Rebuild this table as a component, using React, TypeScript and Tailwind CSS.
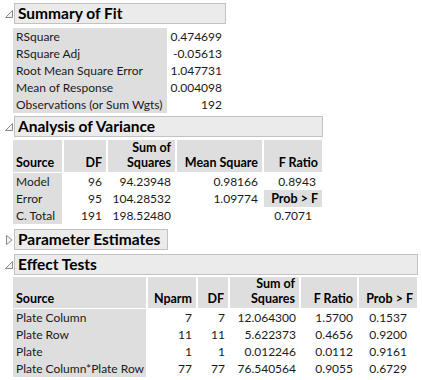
import type { ReactNode } from 'react'

function OpenTri() {
  return (
    <svg width="10" height="10" viewBox="0 0 10 10" className="shrink-0">
      <path d="M1.5 8.5 L8.5 1.5 L8.5 8.5 Z" fill="#f4f4f4" stroke="#8a8a8a" strokeWidth="1" />
    </svg>
  )
}

function ClosedTri() {
  return (
    <svg width="10" height="12" viewBox="0 0 10 12" className="shrink-0">
      <path d="M2.5 1.5 L8 6 L2.5 10.5 Z" fill="#f4f4f4" stroke="#8a8a8a" strokeWidth="1" />
    </svg>
  )
}

function Outline({ title, width, open = true }: { title: string; width: string; open?: boolean }) {
  return (
    <div className="flex items-center">
      <div className="flex w-[10px] justify-center">{open ? <OpenTri /> : <ClosedTri />}</div>
      <div
        className={`${width} h-[21px] border border-[#c2c2c2] bg-[#ebebeb] pl-[3px] text-[15.5px] leading-[19px] font-bold text-black`}
      >
        {title}
      </div>
    </div>
  )
}

function H({ children, left, cls = '' }: { children: ReactNode; left?: boolean; cls?: string }) {
  return (
    <div
      className={`flex flex-col justify-end bg-[#dedede] pb-[2px] text-[12.5px] leading-[15px] font-bold text-black ${
        left ? 'pl-[3px] text-left' : 'pr-[4px] text-right'
      } ${cls}`}
    >
      {children}
    </div>
  )
}

function C({ children, gray, cls = '' }: { children?: ReactNode; gray?: boolean; cls?: string }) {
  return (
    <div className={`h-[17px] leading-[17px] ${gray ? 'bg-[#dedede]' : ''} ${cls}`}>{children}</div>
  )
}

const summary: [string, string][] = [
  ['RSquare', '0.474699'],
  ['RSquare Adj', '-0.05613'],
  ['Root Mean Square Error', '1.047731'],
  ['Mean of Response', '0.004098'],
  ['Observations (or Sum Wgts)', '192'],
]

const effects: [string, string, string, string, string, string][] = [
  ['Plate Column', '7', '7', '12.064300', '1.5700', '0.1537'],
  ['Plate Row', '11', '11', '5.622373', '0.4656', '0.9200'],
  ['Plate', '1', '1', '0.012246', '0.0112', '0.9161'],
  ['Plate Column*Plate Row', '77', '77', '76.540564', '0.9055', '0.6729'],
]

export default function App() {
  return (
    <div
      className="h-[380px] w-[422px] bg-white pt-[3px] pl-[4px] text-[12px] text-[#1a1a1a]"
      style={{ fontFamily: 'Lato, sans-serif' }}
    >
      <Outline title="Summary of Fit" width="w-[212px]" />
      <div className="mt-[4px] ml-[9px] grid grid-cols-[154px_59px]">
        {summary.map(([k, v]) => (
          <div key={k} className="contents">
            <C gray cls="pl-[3px]">{k}</C>
            <C cls="pr-[4px] text-right">{v}</C>
          </div>
        ))}
      </div>

      <div className="mt-[3px]">
        <Outline title="Analysis of Variance" width="w-[309px]" />
      </div>
      <div className="mt-[3px] ml-[9px] grid grid-cols-[49px_42px_67px_85px_58px] gap-x-[2px]">
        <H left cls="h-[32px]">Source</H>
        <H cls="h-[32px]">DF</H>
        <H cls="h-[32px]">
          <span>Sum of</span>
          <span>Squares</span>
        </H>
        <H cls="h-[32px]">Mean Square</H>
        <H cls="h-[32px]">F Ratio</H>
        <div className="col-span-5 h-[1px]" />
        <C gray cls="pl-[3px]">Model</C>
        <C cls="pr-[4px] text-right">96</C>
        <C cls="pr-[4px] text-right">94.23948</C>
        <C cls="pr-[4px] text-right">0.98166</C>
        <C cls="pr-[6px] text-right">0.8943</C>
        <C gray cls="pl-[3px]">Error</C>
        <C cls="pr-[4px] text-right">95</C>
        <C cls="pr-[4px] text-right">104.28532</C>
        <C cls="pr-[4px] text-right">1.09774</C>
        <C gray cls="pr-[4px] text-right text-[12.5px] font-bold text-black">Prob &gt; F</C>
        <C gray cls="pl-[3px]">C. Total</C>
        <C cls="pr-[4px] text-right">191</C>
        <C cls="pr-[4px] text-right">198.52480</C>
        <C />
        <C cls="pr-[10px] text-right">0.7071</C>
      </div>

      <div className="mt-[5px]">
        <Outline title="Parameter Estimates" width="w-[154px]" open={false} />
      </div>

      <div className="mt-[4px]">
        <Outline title="Effect Tests" width="w-[404px]" />
      </div>
      <div className="mt-[2px] ml-[9px] grid grid-cols-[133px_48px_30px_69px_56px_58px] gap-x-[2px]">
        <H left cls="h-[31px]">Source</H>
        <H cls="h-[31px]">Nparm</H>
        <H cls="h-[31px] pr-[2px]">DF</H>
        <H cls="h-[31px] pr-[3px]">
          <span>Sum of</span>
          <span>Squares</span>
        </H>
        <H cls="h-[31px]">F Ratio</H>
        <H cls="h-[31px]">Prob &gt; F</H>
        <div className="col-span-6 h-[1px]" />
        {effects.map((r) => (
          <div key={r[0]} className="contents">
            <C gray cls="pl-[3px]">{r[0]}</C>
            <C cls="pr-[4px] text-right">{r[1]}</C>
            <C cls="pr-[3px] text-right">{r[2]}</C>
            <C cls="pr-[3px] text-right">{r[3]}</C>
            <C cls="pr-[4px] text-right">{r[4]}</C>
            <C cls="pr-[10px] text-right">{r[5]}</C>
          </div>
        ))}
      </div>
    </div>
  )
}
